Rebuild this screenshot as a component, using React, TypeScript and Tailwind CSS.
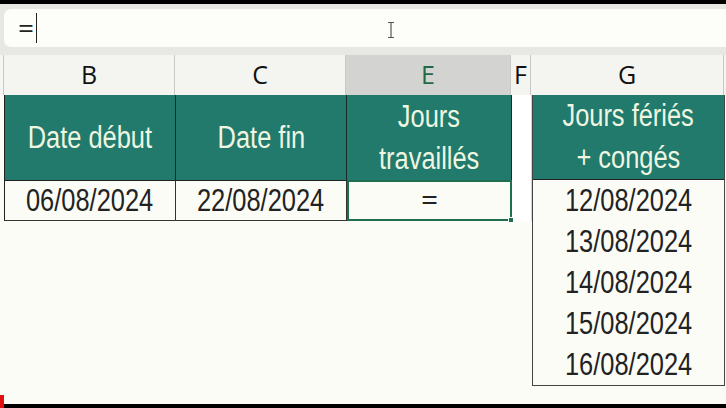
import React from 'react';

const narrow = { fontFamily: '"Liberation Sans", Arial, sans-serif' };
const ui = { fontFamily: '"Open Sans", "Noto Sans", sans-serif' };

const holidays = ['12/08/2024', '13/08/2024', '14/08/2024', '15/08/2024', '16/08/2024'];

// Liberation Sans squeezed to the width of Arial Narrow
function N({ children }: { children: React.ReactNode }) {
  return <span className="inline-block scale-x-[0.82] whitespace-nowrap">{children}</span>;
}

function IBeam() {
  return (
    <svg width="10" height="18" viewBox="0 0 10 18" className="ml-[349px] mt-[4px]">
      <path d="M2 1.5h6M5 1.5v15M2 16.5h6" stroke="#555" strokeWidth="1.2" fill="none" />
    </svg>
  );
}

export default function App() {
  return (
    <div className="w-[726px] h-[408px] overflow-hidden flex flex-col bg-[#fcfcf6] relative">
      <div className="h-[4px] bg-black shrink-0" />

      {/* formula bar */}
      <div className="bg-[#e7e7e4] pt-[5px] pb-[8px] pl-[4px] shrink-0">
        <div className="h-[38px] bg-[#fdfdf9] rounded-l-[7px] flex items-center pl-[14px]" style={ui}>
          <span className="text-[28px] leading-none text-[#222] -mt-[2px]">=</span>
          <span className="w-[1px] h-[30px] bg-[#222] ml-[2px]" />
          <IBeam />
        </div>
      </div>

      {/* column letters */}
      <div className="flex h-[40px] bg-[#f4f4f1] shrink-0 text-[25px] text-[#111]" style={ui}>
        <div className="w-[4px] border-r border-[#c8c8c8]" />
        <div className="w-[171px] border-r border-[#c8c8c8] flex items-center justify-center">B</div>
        <div className="w-[171px] border-r border-[#c8c8c8] flex items-center justify-center">C</div>
        <div className="w-[165px] bg-[#d3d3d1] border-r border-[#c8c8c8] flex items-center justify-center text-[#1f6b45]">E</div>
        <div className="w-[20px] border-r border-[#c8c8c8] flex items-center justify-center">F</div>
        <div className="w-[193px] border-r border-[#c8c8c8] flex items-center justify-center">G</div>
      </div>

      {/* sheet body */}
      <div className="flex items-start pl-[4px]" style={narrow}>
        <div className="flex flex-col border-l border-[#222]">
          <div className="flex h-[85px] bg-[#217a6b] text-[#eef6e2] text-[31px] leading-[42px] text-center">
            <div className="w-[171px] border-r border-[#1b2a28] flex items-center justify-center"><N>Date début</N></div>
            <div className="w-[171px] border-r border-[#1b2a28] flex items-center justify-center"><N>Date fin</N></div>
            <div className="w-[165px] border-r border-[#1b2a28] flex flex-col items-center justify-center"><N>Jours</N><N>travaillés</N></div>
          </div>
          <div className="flex h-[41px] text-[31px] text-[#222] border-t border-[#222]">
            <div className="w-[171px] border-r border-b border-[#333] flex items-center justify-center pt-[2px]"><N>06/08/2024</N></div>
            <div className="w-[171px] border-r border-b border-[#333] flex items-center justify-center pt-[2px]"><N>22/08/2024</N></div>
            <div className="w-[165px] border-2 border-[#1f6e4f] -mt-[1px] flex items-center justify-center relative" style={ui}>
              <span className="text-[30px] leading-none text-[#222] -mt-[3px]">=</span>
              <span className="absolute -right-[4px] -bottom-[4px] w-[6px] h-[6px] bg-[#1f6e4f] border border-white" />
            </div>
          </div>
        </div>

        <div className="w-[20px] h-[126px] bg-white border-r border-[#d4d4d4]" />

        <div className="w-[193px] flex flex-col border border-[#444] border-t-0">
          <div className="h-[85px] bg-[#217a6b] text-[#eef6e2] text-[31px] leading-[42px] flex flex-col items-center justify-center text-center border-b border-[#222]">
            <N>Jours fériés</N>
            <N>+ congés</N>
          </div>
          {holidays.map((d) => (
            <div key={d} className="h-[41px] flex items-center justify-center text-[31px] text-[#222] pt-[2px]"><N>{d}</N></div>
          ))}
        </div>
      </div>

      <div className="absolute left-0 bottom-0 w-full h-[4px] bg-black" />
      <div className="absolute left-0 bottom-0 w-[4px] h-[13px] bg-[#e01010]" />
    </div>
  );
}
